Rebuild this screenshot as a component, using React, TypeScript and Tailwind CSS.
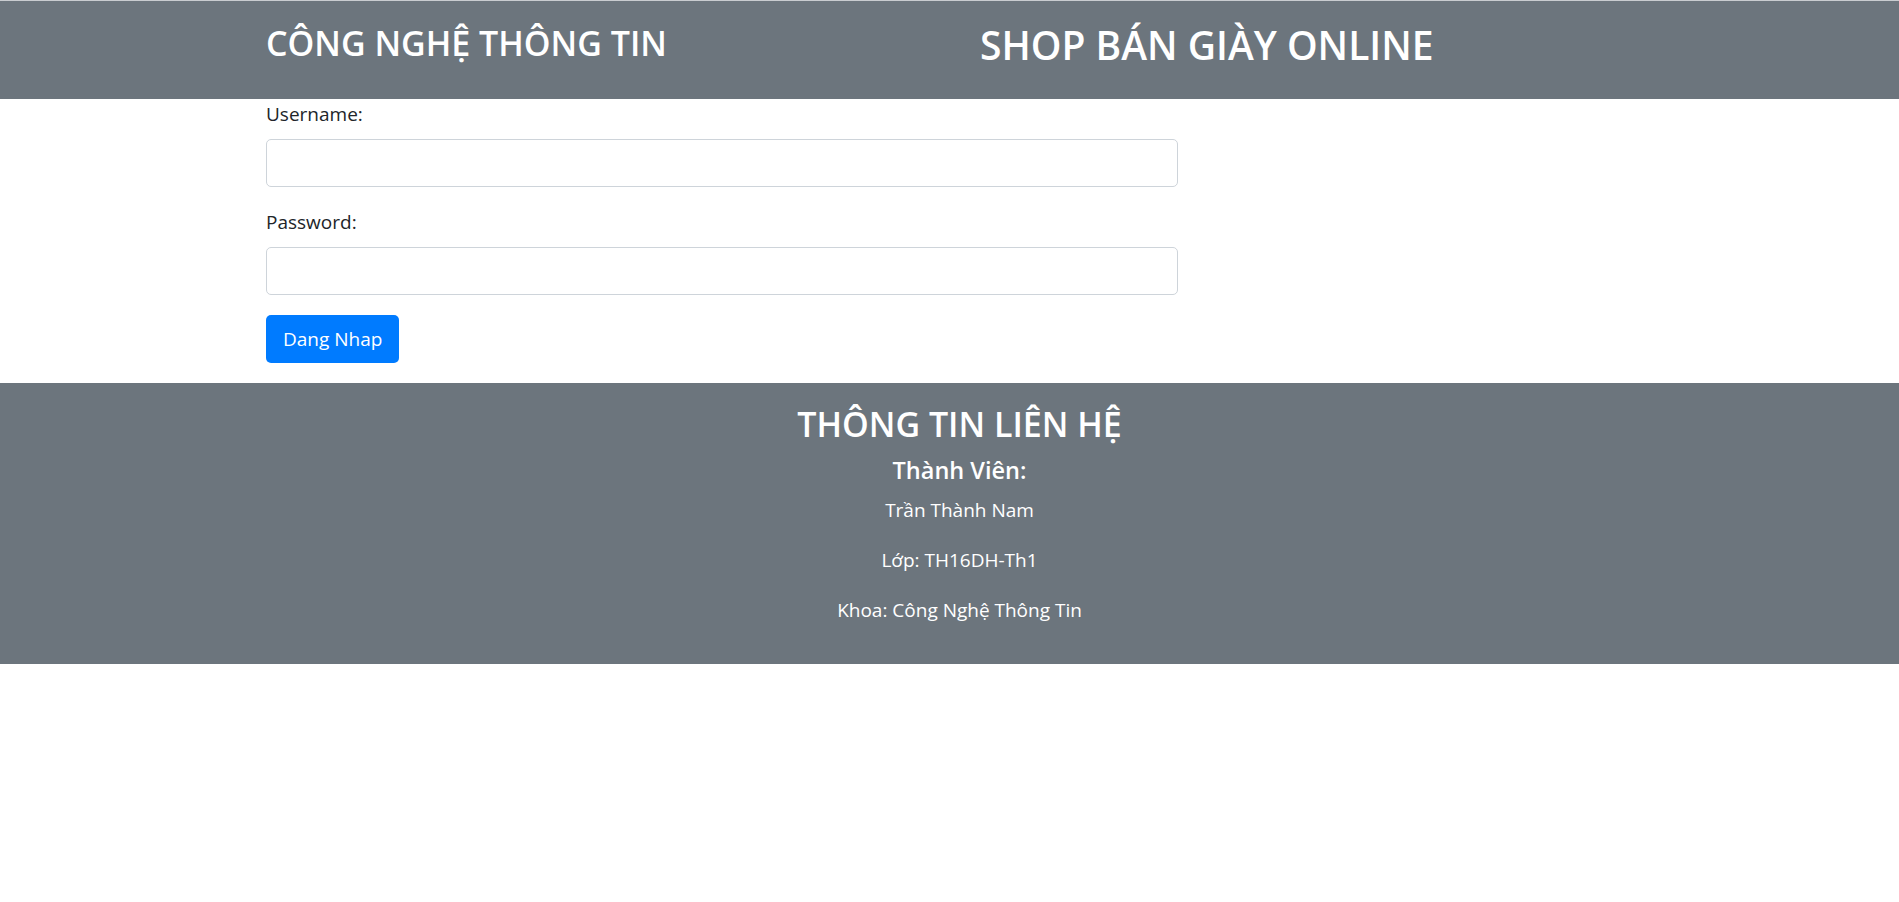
import React from 'react';

const font = { fontFamily: '"Open Sans", "Noto Sans", sans-serif' };

function Header() {
  return (
    <header className="h-[99px] border-t border-[#c9ccd0] bg-[#6c757d] text-white">
      <div className="flex pl-[266px]">
        <div className="w-[714px] pt-[22px]">
          <h3 className="text-[34px] leading-[40px] font-semibold">CÔNG NGHỆ THÔNG TIN</h3>
        </div>
        <div className="pt-[21px]">
          <h2 className="text-[39px] leading-[46px] font-semibold">SHOP BÁN GIÀY ONLINE</h2>
        </div>
      </div>
    </header>
  );
}

function LoginForm() {
  return (
    <form className="ml-[266px] w-[912px] pb-[20px]" onSubmit={(e) => e.preventDefault()}>
      <div className="mb-[20px]">
        <label className="block mb-[10px] text-[19px] leading-[30px] text-[#212529]">Username:</label>
        <input
          type="text"
          className="block h-[48px] w-full rounded-[5px] border border-[#ced4da] bg-white px-[15px] text-[19px]"
        />
      </div>
      <div className="mb-[20px]">
        <label className="block mb-[10px] text-[19px] leading-[30px] text-[#212529]">Password:</label>
        <input
          type="password"
          className="block h-[48px] w-full rounded-[5px] border border-[#ced4da] bg-white px-[15px] text-[19px]"
        />
      </div>
      <button
        type="submit"
        className="h-[48px] rounded-[5px] bg-[#007bff] px-[17px] text-[19px] leading-[30px] text-white"
      >
        Dang Nhap
      </button>
    </form>
  );
}

function Footer() {
  return (
    <footer className="bg-[#6c757d] text-white">
      <div className="ml-[266px] w-[1387px] pt-[20px] pb-[19px] text-center">
        <h3 className="mb-[10px] text-[34px] leading-[42px] font-semibold">THÔNG TIN LIÊN HỆ</h3>
        <h5 className="mb-[10px] text-[23.5px] leading-[30px] font-semibold">Thành Viên:</h5>
        <p className="mb-[20px] text-[19px] leading-[30px]">Trần Thành Nam</p>
        <p className="mb-[20px] text-[19px] leading-[30px]">Lớp: TH16DH-Th1</p>
        <p className="mb-[20px] text-[19px] leading-[30px]">Khoa: Công Nghệ Thông Tin</p>
      </div>
    </footer>
  );
}

export default function App() {
  return (
    <div className="min-h-screen bg-white" style={font}>
      <Header />
      <LoginForm />
      <Footer />
    </div>
  );
}
